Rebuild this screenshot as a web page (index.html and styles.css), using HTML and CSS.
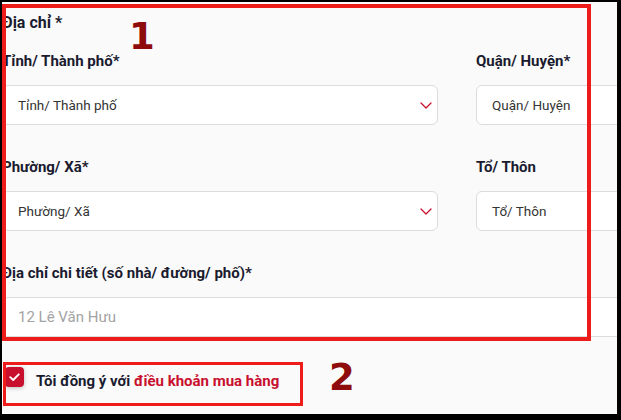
FILE: index.html
```html
<!DOCTYPE html>
<html lang="vi">
<head>
<meta charset="utf-8">
<title>Địa chỉ</title>
<link rel="stylesheet" href="styles.css">
</head>
<body>
<div class="screen">
  <form class="form">
    <h2 class="heading">Địa chỉ *</h2>
    <div class="grid">
      <div class="field">
        <label class="label">Tỉnh/ Thành phố*</label>
        <div class="control select"><span>Tỉnh/ Thành phố</span>
          <svg class="chev" width="12" height="7" viewBox="0 0 12 7"><path d="M1 1 L6 6 L11 1" fill="none" stroke="#c8102e" stroke-width="1.3" stroke-linecap="round" stroke-linejoin="round"/></svg>
        </div>
      </div>
      <div class="field">
        <label class="label">Quận/ Huyện*</label>
        <div class="control"><span>Quận/ Huyện</span></div>
      </div>
      <div class="field">
        <label class="label">Phường/ Xã*</label>
        <div class="control select"><span>Phường/ Xã</span>
          <svg class="chev" width="12" height="7" viewBox="0 0 12 7"><path d="M1 1 L6 6 L11 1" fill="none" stroke="#c8102e" stroke-width="1.3" stroke-linecap="round" stroke-linejoin="round"/></svg>
        </div>
      </div>
      <div class="field">
        <label class="label">Tổ/ Thôn</label>
        <div class="control"><span>Tổ/ Thôn</span></div>
      </div>
      <div class="field full">
        <label class="label">Địa chỉ chi tiết (số nhà/ đường/ phố)*</label>
        <div class="control"><span class="placeholder">12 Lê Văn Hưu</span></div>
      </div>
    </div>
    <div class="agree">
      <span class="check">
        <svg width="20" height="20" viewBox="0 0 20 20"><path d="M5.5 10.2 L8.6 13.2 L14.5 7.2" fill="none" stroke="#fff" stroke-width="2" stroke-linecap="round" stroke-linejoin="round"/></svg>
      </span>
      <span class="agree-text">Tôi đồng ý với <span class="link">điều khoản mua hàng</span></span>
    </div>
  </form>
  <div class="mark mark1"></div>
  <div class="mark mark2"></div>
  <span class="num num1">1</span>
  <span class="num num2">2</span>
</div>
</body>
</html>
```
FILE: styles.css
```css
html {
  background: #000;
}
body {
  margin: 0;
}
.screen {
  position: relative;
  margin: 2px 0 0 2px;
  width: 615px;
  height: 412px;
  overflow: hidden;
  background: #fafafa;
  font-family: Roboto, Inter, "Noto Sans", sans-serif;
  color: #1b1b2f;
}
.form {
  padding-top: 11px;
}
.heading {
  margin: 0 0 18px;
  font-size: 16px;
  line-height: 20px;
  font-weight: 700;
}
.grid {
  display: grid;
  grid-template-columns: 436px 180px;
  column-gap: 38px;
  row-gap: 32px;
}
.field {
  display: flex;
  flex-direction: column;
  gap: 14px;
}
.full {
  grid-column: 1 / 3;
}
.label {
  font-size: 15px;
  line-height: 20px;
  font-weight: 700;
}
.control {
  box-sizing: border-box;
  height: 40px;
  display: flex;
  align-items: center;
  justify-content: space-between;
  padding: 0 5px 0 15px;
  background: #fff;
  border: 1px solid #dcdcdc;
  border-radius: 6px;
  font-size: 13.5px;
  color: #333;
}
.chev {
  display: block;
}
.placeholder {
  font-size: 15px;
  color: #a3a3a3;
}
.agree {
  display: flex;
  align-items: flex-start;
  margin-top: 30px;
  margin-left: 3px;
}
.check {
  width: 19px;
  height: 20px;
  border-radius: 4px;
  background: #c8102e;
  box-shadow: 0 1px 4px rgba(0, 0, 0, 0.25);
  display: flex;
}
.agree-text {
  margin-left: 12px;
  padding-top: 4px;
  font-size: 15px;
  line-height: 20px;
  font-weight: 700;
}
.link {
  color: #c8102e;
}
.mark {
  position: absolute;
  box-sizing: border-box;
  border: 4px solid #ee1b1b;
}
.mark1 {
  left: 0;
  top: 2px;
  width: 589px;
  height: 337px;
}
.mark2 {
  left: 1px;
  top: 360px;
  width: 300px;
  height: 44px;
  border-width: 3px;
}
.num {
  position: absolute;
  font-family: "DejaVu Sans", "Liberation Sans", sans-serif;
  font-weight: 700;
  font-size: 37px;
  line-height: 1;
  color: #8e0c0c;
}
.num1 {
  left: 127px;
  top: 16px;
}
.num2 {
  left: 327px;
  top: 357px;
}
```
